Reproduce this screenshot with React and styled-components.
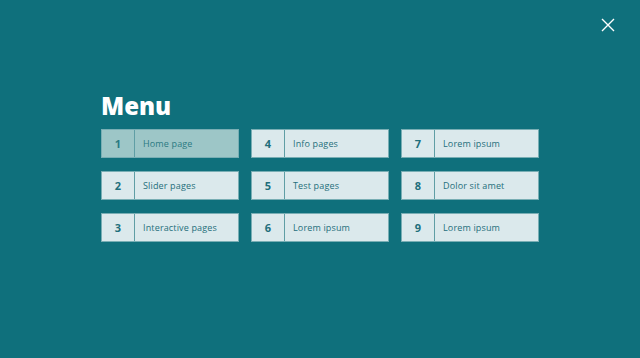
import React from 'react';
import styled, { createGlobalStyle } from 'styled-components';

const GlobalStyle = createGlobalStyle`
    html, body {
        margin: 0;
        padding: 0;
        background: #0f707c;
    }
    * { box-sizing: border-box; }
`;

const Page = styled.div`
    position: relative;
    width: 640px;
    height: 358px;
    background: #0f707c;
    padding: 91px 0 0 101px;
    font-family: "Open Sans", "Liberation Sans", sans-serif;
    overflow: hidden;
`;

const CloseButton = styled.button`
    position: absolute;
    top: 18px;
    right: 25px;
    width: 14px;
    height: 14px;
    padding: 0;
    border: none;
    background: none;
    display: flex;
    cursor: pointer;
`;

const Title = styled.h1`
    margin: 0 0 8px;
    font-size: 24px;
    line-height: 30px;
    font-weight: 800;
    color: #ffffff;
`;

const Grid = styled.div`
    display: grid;
    grid-template-columns: repeat(3, 138px);
    grid-auto-flow: column;
    grid-template-rows: repeat(3, 29px);
    column-gap: 12px;
    row-gap: 13px;
`;

const Item = styled.a`
    display: flex;
    align-items: stretch;
    height: 29px;
    border: 1px solid #78aeb4;
    background: ${({ active }) => (active ? '#9dc6c7' : '#dbe9ec')};
    color: ${({ active }) => (active ? '#2b7a82' : '#1f6f7b')};
    text-decoration: none;
`;

const Num = styled.span`
    width: 33px;
    flex-shrink: 0;
    display: flex;
    align-items: center;
    justify-content: center;
    border-right: 1px solid #5f9ea5;
    font-size: 11px;
    font-weight: 700;
`;

const Label = styled.span`
    display: flex;
    align-items: center;
    padding-left: 8px;
    font-size: 9px;
    font-weight: 400;
    letter-spacing: 0.15px;
`;

const items = [
    'Home page',
    'Slider pages',
    'Interactive pages',
    'Info pages',
    'Test pages',
    'Lorem ipsum',
    'Lorem ipsum',
    'Dolor sit amet',
    'Lorem ipsum',
];

const App = () => (
    <Page>
        <GlobalStyle />
        <CloseButton aria-label="Close">
            <svg width="14" height="14" viewBox="0 0 14 14">
                <path d="M1 1 L13 13 M13 1 L1 13" stroke="#ffffff" strokeWidth="1.4" fill="none" />
            </svg>
        </CloseButton>
        <Title>Menu</Title>
        <Grid>
            {items.map((label, i) => (
                <Item key={i} href="#" active={i === 0 ? 1 : 0}>
                    <Num>{i + 1}</Num>
                    <Label>{label}</Label>
                </Item>
            ))}
        </Grid>
    </Page>
);

export default App;
